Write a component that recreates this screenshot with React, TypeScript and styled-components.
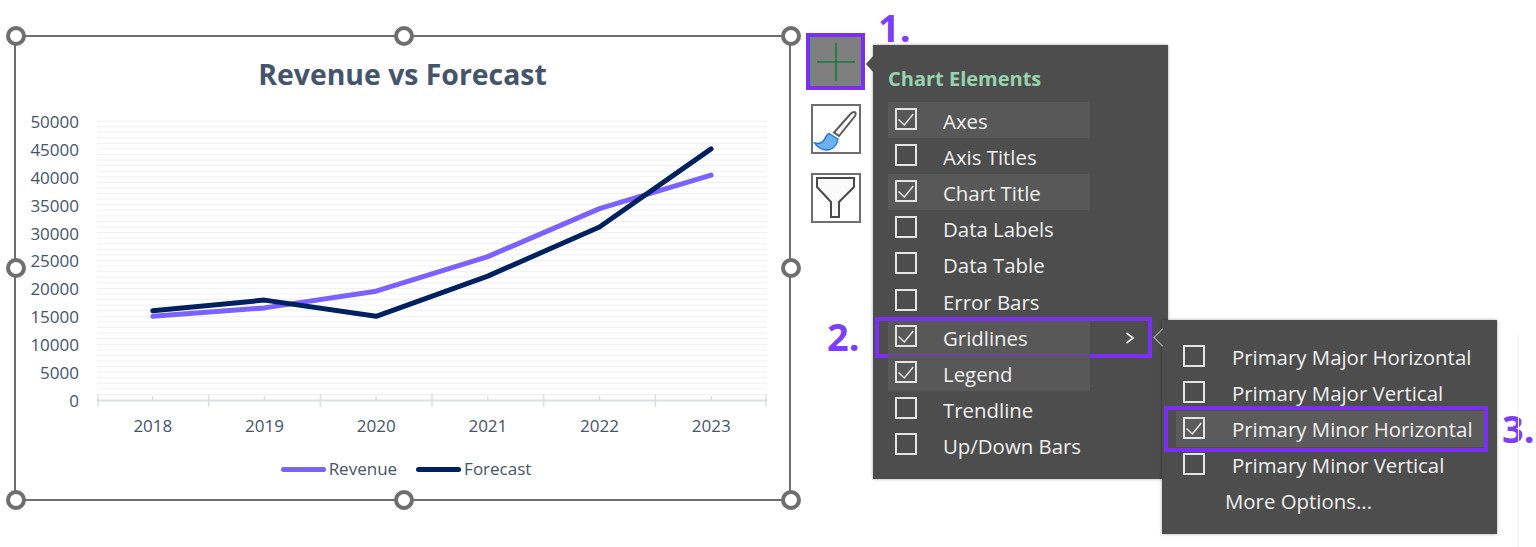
import styled, { createGlobalStyle } from "styled-components";

const Global = createGlobalStyle`
  html, body { margin: 0; background: #fff; }
  body { font-family: "Open Sans", "Noto Sans", sans-serif; }
`;

const Page = styled.div`
  position: relative;
  width: 1536px; height: 547px; overflow: hidden;
  display: flex; align-items: flex-start;
  padding-left: 14px; box-sizing: border-box;
  background: #fff;
`;

/* chart */
const Frame = styled.section`
  position: relative;
  flex: none;
  width: 777px; height: 466px; margin-top: 35px;
  box-sizing: border-box;
  border: 2px solid #6e6e6e;
  color: #44546a;
  display: flex; flex-direction: column;
`;
const HandleLayer = styled.div`
  position: absolute;
  inset: -1px -2px -1px 0;
  pointer-events: none;
`;
const Handle = styled.i<{ $x: number; $y: number }>`
  position: absolute;
  left: ${p => p.$x}%; top: ${p => p.$y}%;
  width: 20px; height: 20px;
  box-sizing: border-box;
  margin: -10px 0 0 -10px;
  border: 4px solid #6e6e6e; border-radius: 50%;
  background: #fff;
`;
const Title = styled.h1`
  margin: 18px 0 0;
  height: 38px; line-height: 38px;
  font-size: 28.4px; font-weight: 700;
  text-align: center;
  color: #44546a;
`;
const PlotRow = styled.div`
  display: flex;
  margin-top: 15px;
`;
const YLabels = styled.div`
  width: 81px; height: 307px;
  padding-right: 18px; box-sizing: border-box;
  display: flex; flex-direction: column; align-items: flex-end;
  font-size: 17px;
  span { height: 27.9px; line-height: 27.9px; }
`;
const Years = styled.div`
  display: flex;
  margin-left: 81px; width: 670px; margin-top: -1px;
  height: 24px; line-height: 24px;
  font-size: 17px;
  span { flex: 1; text-align: center; }
`;
const Legend = styled.div`
  display: flex; justify-content: center; gap: 19px;
  margin-top: 19px; padding-left: 7px;
  height: 24px; line-height: 24px;
  font-size: 17px;
`;
const LegendItem = styled.div`
  display: flex; align-items: center; gap: 3px;
`;
const LegendKey = styled.i<{ $color: string }>`
  width: 45px; height: 5px; border-radius: 3px;
  background: ${p => p.$color};
`;

/* tool buttons */
const Tools = styled.div`
  flex: none;
  width: 59px; margin: 33px 0 0 15px;
  display: flex; flex-direction: column; align-items: center;
`;
const PlusButton = styled.button`
  width: 59px; height: 57px; padding: 0;
  box-sizing: border-box;
  border: 4px solid #7a2ff2;
  background: #7f7f7f;
  display: flex; align-items: center; justify-content: center;
  box-shadow: inset 1px 0 0 #3f9a6c;
`;
const ToolButton = styled.button<{ $top: number }>`
  width: 50px; height: 50px; padding: 0;
  margin-top: ${p => p.$top}px; margin-left: 1px;
  box-sizing: border-box;
  border: 2px solid #6e6e6e;
  background: #fff;
  display: block;
  svg { display: block; }
`;

/* menus */
const Panel = styled.div`
  position: relative;
  flex: none;
  width: 295px; height: 434px; margin: 45px 0 0 8px;
  padding: 21px 0 0 15px; box-sizing: border-box;
  background: #4d4d4d;
  box-shadow: 0 0 3px rgba(0,0,0,.35);
  color: #f0f0f0;
  &::before {
    content: ""; position: absolute;
    left: -7px; top: 11px;
    border-style: solid; border-width: 8px 7px 8px 0;
    border-color: transparent #4d4d4d transparent transparent;
  }
`;
const PanelTitle = styled.h2`
  margin: 0 0 10px;
  height: 26px; line-height: 26px;
  font-size: 20px; font-weight: 700;
  color: #97d3b0;
`;
const Row = styled.div<{ $on?: boolean }>`
  position: relative;
  width: 202px; height: 36.1px;
  display: flex; align-items: center; gap: 26px;
  padding-left: 7px; box-sizing: border-box;
  font-size: 20.4px;
  white-space: nowrap;
  background: ${p => (p.$on ? "#585858" : "transparent")};
`;
const RowLabel = styled.span`
  padding-top: 2px;
`;
const Box = styled.span`
  flex: none;
  width: 22px; height: 22px; margin-top: -2px;
  box-sizing: border-box;
  border: 2px solid #e4e4e4;
  svg { display: block; }
`;
const Callout = styled.i<{ $left: number; $top: number; $w: number; $h: number }>`
  position: absolute;
  left: ${p => p.$left}px; top: ${p => p.$top}px;
  width: ${p => p.$w}px; height: ${p => p.$h}px;
  box-sizing: border-box;
  border: 4px solid #7a2ff2;
  pointer-events: none;
`;
const Chevron = styled.svg`
  position: absolute;
  left: 237px; top: 13px;
`;
const Flyout = styled.div`
  position: absolute;
  left: 274px; top: 1.5px;
  width: 335px; height: 214px;
  padding: 18.5px 0 0 14px; box-sizing: border-box;
  background: #4d4d4d;
  box-shadow: 0 0 3px rgba(0,0,0,.35);
  &::before {
    content: ""; position: absolute;
    left: -6px; top: 11px;
    width: 12px; height: 12px;
    background: #4d4d4d;
    border-left: 1px solid #b5b5b5; border-bottom: 1px solid #b5b5b5;
    transform: rotate(45deg);
  }
`;
const FlyRow = styled(Row)`
  width: 308px; gap: 27px;
  background: ${p => (p.$on ? "#5b5b5b" : "transparent")};
`;
const MoreRow = styled.div`
  height: 36px; line-height: 36px;
  padding-left: 49px;
  font-size: 20.4px;
`;

const Step = styled.b<{ $left: number; $top: number }>`
  position: absolute;
  left: ${p => p.$left}px; top: ${p => p.$top}px;
  font-size: 38px; line-height: 52px; font-weight: 700;
  color: #7c3ff5;
`;
const EdgeRule = styled.i`
  position: absolute;
  left: 1518px; top: 335px;
  width: 1px; height: 212px;
  background: #f2f2f2;
`;

const years = ["2018", "2019", "2020", "2021", "2022", "2023"];
const ticks = ["50000", "45000", "40000", "35000", "30000", "25000", "20000", "15000", "10000", "5000", "0"];
const revenue = [15000, 16500, 19500, 25700, 34300, 40300];
const forecast = [16000, 17900, 15000, 22200, 31000, 45000];

const toY = (v: number) => 292 - v * 0.00558;
const toX = (i: number) => 55.8 + i * 111.67;
const line = (data: number[]) => data.map((v, i) => `${toX(i).toFixed(1)},${toY(v).toFixed(1)}`).join(" ");

function Plot() {
  const grid = Array.from({ length: 50 }, (_, i) => toY((i + 1) * 1000));
  return (
    <svg width="670" height="307" viewBox="0 0 670 307">
      {grid.map(y => (
        <line key={y} x1="0" x2="670" y1={y} y2={y} stroke="#eff0f2" strokeWidth="1" />
      ))}
      <line x1="0" x2="670" y1="292.5" y2="292.5" stroke="#d9dee8" strokeWidth="2" />
      {Array.from({ length: 7 }, (_, i) => {
        const x = Math.min(Math.max(i * 111.67, 1), 669);
        return <line key={i} x1={x} x2={x} y1="286" y2="299" stroke="#d9dee8" strokeWidth="1.5" />;
      })}
      {years.map((y, i) => (
        <line key={y} x1={toX(i)} x2={toX(i)} y1="288" y2="293" stroke="#d9dee8" strokeWidth="1.5" />
      ))}
      <polyline points={line(revenue)} fill="none" stroke="#7b61ff" strokeWidth="5" strokeLinecap="round" strokeLinejoin="round" />
      <polyline points={line(forecast)} fill="none" stroke="#00215f" strokeWidth="5" strokeLinecap="round" strokeLinejoin="round" />
    </svg>
  );
}

const Check = () => (
  <svg width="18" height="18" viewBox="0 0 18 18">
    <polyline points="1.5,9.5 7.3,15 16.3,4" fill="none" stroke="#e8e8e8" strokeWidth="1.5" />
  </svg>
);

const elements: { label: string; on?: boolean; checked?: boolean }[] = [
  { label: "Axes", on: true, checked: true },
  { label: "Axis Titles" },
  { label: "Chart Title", on: true, checked: true },
  { label: "Data Labels" },
  { label: "Data Table" },
  { label: "Error Bars" },
  { label: "Gridlines", on: true, checked: true },
  { label: "Legend", on: true, checked: true },
  { label: "Trendline" },
  { label: "Up/Down Bars" },
];

const handles = [
  [0, 0], [50, 0], [100, 0],
  [0, 50], [100, 50],
  [0, 100], [50, 100], [100, 100],
];

function GridlinesFlyout() {
  return (
    <Flyout>
      <FlyRow><Box /><span>Primary Major Horizontal</span></FlyRow>
      <FlyRow><Box /><span>Primary Major Vertical</span></FlyRow>
      <FlyRow $on>
        <Box><Check /></Box>
        <span>Primary Minor Horizontal</span>
        <Callout $left={-12} $top={-5} $w={324} $h={46} />
      </FlyRow>
      <FlyRow><Box /><span>Primary Minor Vertical</span></FlyRow>
      <MoreRow>More Options...</MoreRow>
    </Flyout>
  );
}

export default function App() {
  return (
    <Page>
      <Global />
      <Frame>
        <Title>Revenue vs Forecast</Title>
        <PlotRow>
          <YLabels>
            {ticks.map(t => <span key={t}>{t}</span>)}
          </YLabels>
          <Plot />
        </PlotRow>
        <Years>
          {years.map(y => <span key={y}>{y}</span>)}
        </Years>
        <Legend>
          <LegendItem><LegendKey $color="#7b61ff" />Revenue</LegendItem>
          <LegendItem><LegendKey $color="#00215f" />Forecast</LegendItem>
        </Legend>
        <HandleLayer>
          {handles.map(([x, y]) => <Handle key={`${x}-${y}`} $x={x} $y={y} />)}
        </HandleLayer>
      </Frame>

      <Tools>
        <PlusButton>
          <svg width="40" height="40" viewBox="0 0 40 40">
            <path d="M20 1V39M1 20H39" stroke="#107c41" strokeWidth="1.6" fill="none" />
          </svg>
        </PlusButton>
        <ToolButton $top={14}>
          <svg width="46" height="46" viewBox="0 0 46 46">
            <path d="M41 6C43 6 43 8 42 10L26 30L21 26.5L36.5 9C38 7 40 6 41 6Z" fill="#fff" stroke="#5a5a5a" strokeWidth="2" />
            <path d="M16 27.5L25 33C24 39 20 44 13 44C9 44 4 41 1.5 37C5 38 9 37 11 34C13 31 14 28 16 27.5Z" fill="#6fb1ec" stroke="#1b75c9" strokeWidth="1.4" />
          </svg>
        </ToolButton>
        <ToolButton $top={19}>
          <svg width="46" height="46" viewBox="0 0 46 46">
            <path d="M4 3H41V12L26 27V42H18V27L4 12Z" fill="#fafafa" stroke="#4a4a4a" strokeWidth="2" />
          </svg>
        </ToolButton>
      </Tools>

      <Panel>
        <PanelTitle>Chart Elements</PanelTitle>
        {elements.map(el => (
          <Row key={el.label} $on={el.on}>
            <Box>{el.checked && <Check />}</Box>
            <RowLabel>{el.label}</RowLabel>
            {el.label === "Gridlines" && (
              <>
                <Chevron width="10" height="12" viewBox="0 0 10 12">
                  <polyline points="1.5,1 8,6 1.5,11" fill="none" stroke="#eee" strokeWidth="1.7" />
                </Chevron>
                <Callout $left={-13} $top={-2} $w={277} $h={41} />
                <GridlinesFlyout />
              </>
            )}
          </Row>
        ))}
      </Panel>

      <Step $left={878} $top={1}>1.</Step>
      <Step $left={827} $top={310}>2.</Step>
      <Step $left={1502} $top={402}>3.</Step>
      <EdgeRule />
    </Page>
  );
}
